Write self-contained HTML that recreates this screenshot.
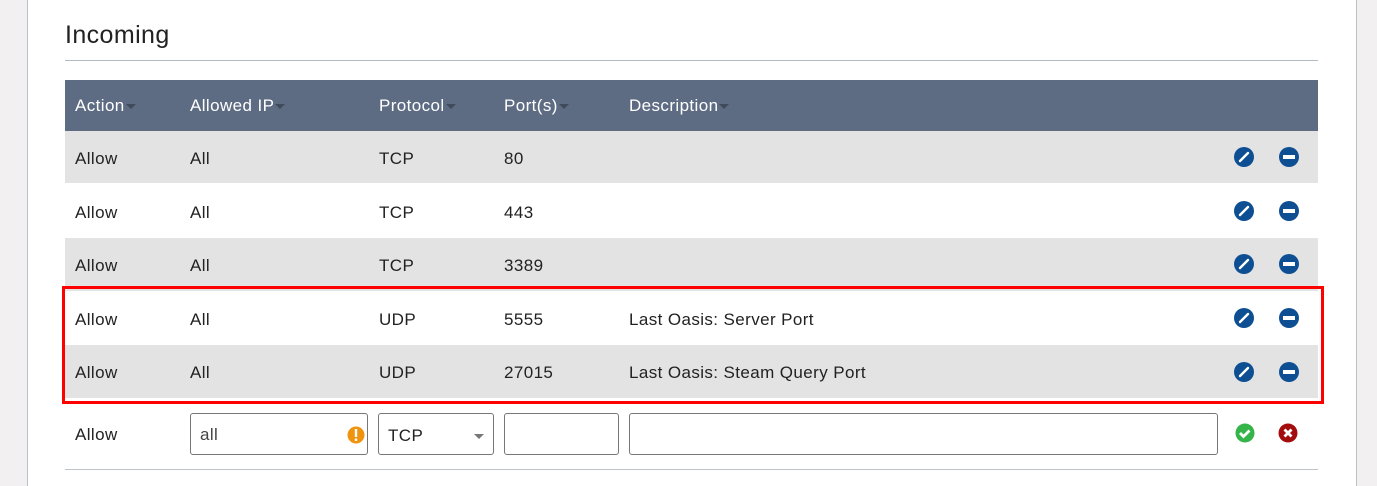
<!DOCTYPE html>
<html><head><style>
body{margin:0;width:1377px;height:486px;background:#f2f0f0;font-family:"Liberation Sans",sans-serif;position:relative;overflow:hidden;color:#222}
.panel{position:absolute;left:27px;top:0;width:1328px;height:486px;background:#fff;border-left:1px solid #b8c0c8;border-right:1px solid #b8c0c8}
.abs{position:absolute}
h1{position:absolute;left:65px;top:21px;margin:0;font-weight:normal;font-size:25px;color:#222;letter-spacing:0.4px}
.hr{position:absolute;left:65px;width:1253px;height:1px;background:#b0bac4}
.head{position:absolute;left:65px;top:80px;width:1253px;height:51px;background:#5e6c83;color:#fff;font-size:17px;letter-spacing:0.4px}
.head span{position:absolute;top:16px}
.car{display:inline-block;width:0;height:0;border-left:5px solid transparent;border-right:5px solid transparent;border-top:5px solid #3f4a5c;vertical-align:middle;margin-left:1px}
.row{position:absolute;left:65px;width:1253px;font-size:17px;letter-spacing:0.4px}
.row span{position:absolute}
.g{background:#e3e3e3}
.inp{position:absolute;top:413px;height:42px;border:1px solid #777;border-radius:3px;box-sizing:border-box;background:#fff;font-size:17px;letter-spacing:0.4px}
svg{z-index:5}
</style></head><body>
<div class="panel"></div>
<h1>Incoming</h1>
<div class="hr" style="top:60px"></div>
<div class="head">
<span style="left:10px">Action<i class="car"></i></span>
<span style="left:125px">Allowed IP<i class="car"></i></span>
<span style="left:314px">Protocol<i class="car"></i></span>
<span style="left:439px">Port(s)<i class="car"></i></span>
<span style="left:564px">Description<i class="car"></i></span>
</div>

<div class="row g" style="top:131px;height:52px"><span style="left:10px;top:18px">Allow</span><span style="left:125px;top:18px">All</span><span style="left:314px;top:18px">TCP</span><span style="left:439px;top:18px">80</span></div>
<div class="row" style="top:185px;height:52px"><span style="left:10px;top:18px">Allow</span><span style="left:125px;top:18px">All</span><span style="left:314px;top:18px">TCP</span><span style="left:439px;top:18px">443</span></div>
<div class="row g" style="top:238px;height:53px"><span style="left:10px;top:18px">Allow</span><span style="left:125px;top:18px">All</span><span style="left:314px;top:18px">TCP</span><span style="left:439px;top:18px">3389</span></div>
<div class="row" style="top:291px;height:54px"><span style="left:10px;top:19px">Allow</span><span style="left:125px;top:19px">All</span><span style="left:314px;top:19px">UDP</span><span style="left:439px;top:19px">5555</span><span style="left:564px;top:19px">Last Oasis: Server Port</span></div>
<div class="row g" style="top:345px;height:53px"><span style="left:10px;top:18px">Allow</span><span style="left:125px;top:18px">All</span><span style="left:314px;top:18px">UDP</span><span style="left:439px;top:18px">27015</span><span style="left:564px;top:18px">Last Oasis: Steam Query Port</span></div>

<div class="abs" style="left:62px;top:286px;width:1256px;height:112px;border:3px solid #f00"></div>

<span class="abs" style="left:75px;top:425px;font-size:17px;letter-spacing:0.4px">Allow</span>
<div class="inp" style="left:190px;width:178px"><span class="abs" style="left:9px;top:11px;color:#444">all</span></div>
<div class="inp" style="left:378px;width:116px"><span class="abs" style="left:9px;top:12px">TCP</span></div>
<div class="inp" style="left:504px;width:115px"></div>
<div class="inp" style="left:629px;width:589px"></div>
<div class="hr" style="top:469px;background:#bfc4c9"></div>

<svg class="abs" style="left:0;top:0" width="1377" height="486">
<g fill="#0e4f94">
<circle cx="1244" cy="157" r="10"/><circle cx="1289" cy="157" r="10"/>
<circle cx="1244" cy="211" r="10"/><circle cx="1289" cy="211" r="10"/>
<circle cx="1244" cy="264" r="10"/><circle cx="1289" cy="264" r="10"/>
<circle cx="1244" cy="318" r="10"/><circle cx="1289" cy="318" r="10"/>
<circle cx="1244" cy="372" r="10"/><circle cx="1289" cy="372" r="10"/>
</g>
<g fill="#fff">
<rect x="1283" y="155" width="12" height="4"/><rect x="1283" y="209" width="12" height="4"/><rect x="1283" y="262" width="12" height="4"/><rect x="1283" y="316" width="12" height="4"/><rect x="1283" y="370" width="12" height="4"/>
</g>
<g stroke="#fff" stroke-width="2.4" stroke-linecap="round">
<line x1="1240" y1="161" x2="1248" y2="153"/><line x1="1240" y1="215" x2="1248" y2="207"/><line x1="1240" y1="268" x2="1248" y2="260"/><line x1="1240" y1="322" x2="1248" y2="314"/><line x1="1240" y1="376" x2="1248" y2="368"/>
</g>
<circle cx="1245" cy="433" r="9.5" fill="#35b44a"/>
<path d="M1240 433 l3.5 3.5 l6 -6" stroke="#fff" stroke-width="2.8" fill="none"/>
<circle cx="1288" cy="433" r="9.5" fill="#a30d0d"/>
<path d="M1284.5 429.5 l7 7 M1291.5 429.5 l-7 7" stroke="#fff" stroke-width="2.8"/>
<circle cx="356" cy="435" r="8.5" fill="#f0930e"/>
<rect x="354.8" y="429" width="2.4" height="8" fill="#fff"/><rect x="354.8" y="438.5" width="2.4" height="2.4" fill="#fff"/>
<path d="M474 434 h10 l-5 5z" fill="#777"/>
</svg>
</body></html>
